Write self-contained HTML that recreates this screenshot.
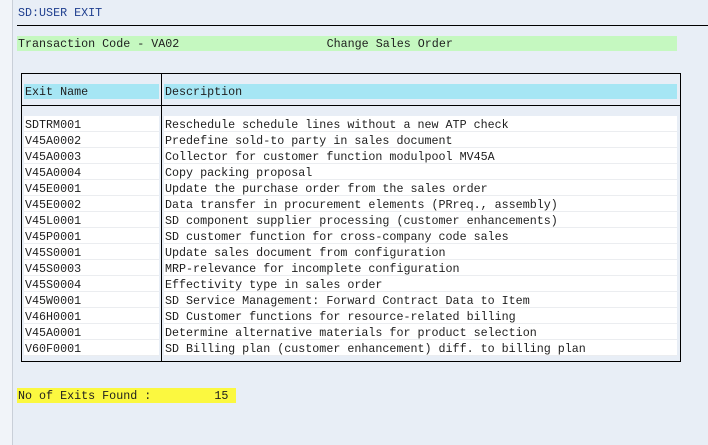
<!DOCTYPE html>
<html><head><meta charset="utf-8"><style>
body{margin:0;width:708px;height:445px;background:#e8eef6;position:relative;overflow:hidden;font-family:"Liberation Mono",monospace;font-size:11.7px;color:#1e1e1e}
.strip{position:absolute;left:0;top:0;width:12px;height:445px;background:#f1f4f9;border-right:1px solid #c9cfd8}
.t{position:absolute;white-space:pre;line-height:15px}
.title{left:18px;top:6px;color:#1f3f8f}
.hr{position:absolute;left:17px;top:25px;width:691px;height:1px;background:#000}
.green{position:absolute;left:17px;top:36px;width:660px;height:15px;background:#c5f8c0}
.box{position:absolute;left:21px;top:73px;width:658px;height:287px;border:1px solid #000}
.vd{position:absolute;left:161px;top:73px;width:1px;height:289px;background:#000}
.hd{position:absolute;left:21px;top:105px;width:659px;height:1px;background:#000}
.cy{position:absolute;top:84px;height:15px;background:#a6e6f4}
.row{position:absolute;height:15px;background:#fff;border-bottom:1px solid #ebedf0}
.yel{position:absolute;left:17px;top:388px;width:219px;height:15px;background:#fbf840}
</style></head><body>
<div class="strip"></div>
<div class="t title">SD:USER EXIT</div>
<div class="hr"></div>
<div class="green"></div>
<div class="t" style="left:18px;top:37px">Transaction Code - VA02                     Change Sales Order</div>
<div class="box"></div>
<div class="vd"></div>
<div class="hd"></div>
<div class="cy" style="left:24px;width:135px"></div>
<div class="cy" style="left:164px;width:513px"></div>
<div class="t" style="left:25px;top:85px">Exit Name</div>
<div class="t" style="left:165px;top:85px">Description</div>
<div id="rows"></div>
<script>
var d=[["SDTRM001","Reschedule schedule lines without a new ATP check"],["V45A0002","Predefine sold-to party in sales document"],["V45A0003","Collector for customer function modulpool MV45A"],["V45A0004","Copy packing proposal"],["V45E0001","Update the purchase order from the sales order"],["V45E0002","Data transfer in procurement elements (PRreq., assembly)"],["V45L0001","SD component supplier processing (customer enhancements)"],["V45P0001","SD customer function for cross-company code sales"],["V45S0001","Update sales document from configuration"],["V45S0003","MRP-relevance for incomplete configuration"],["V45S0004","Effectivity type in sales order"],["V45W0001","SD Service Management: Forward Contract Data to Item"],["V46H0001","SD Customer functions for resource-related billing"],["V45A0001","Determine alternative materials for product selection"],["V60F0001","SD Billing plan (customer enhancement) diff. to billing plan"]];
var h="";for(var i=0;i<d.length;i++){var y=116+i*16;
h+='<div class="row" style="left:24px;width:135px;top:'+y+'px"></div><div class="row" style="left:164px;width:513px;top:'+y+'px"></div>';
h+='<div class="t" style="left:25px;top:'+(y+2)+'px">'+d[i][0]+'</div><div class="t" style="left:165px;top:'+(y+2)+'px">'+d[i][1]+'</div>';}
document.getElementById("rows").innerHTML=h;
</script>
<div class="yel"></div>
<div class="t" style="left:18px;top:389px">No of Exits Found :         15</div>
</body></html>
